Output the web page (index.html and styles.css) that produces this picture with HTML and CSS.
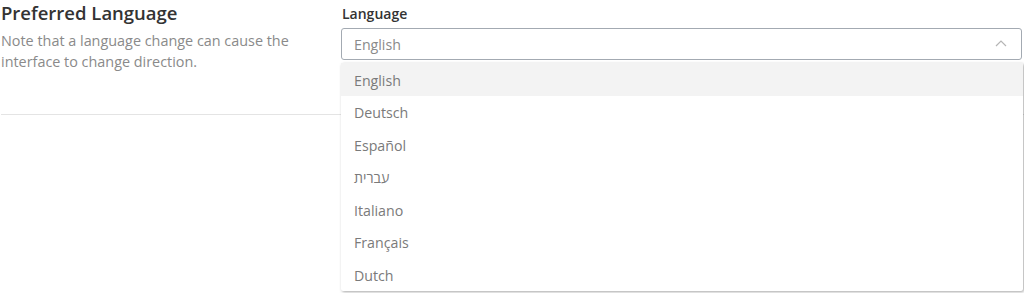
FILE: index.html
```html
<!DOCTYPE html>
<html lang="en">
<head>
  <meta charset="UTF-8" />
  <meta name="viewport" content="width=device-width, initial-scale=1.0"/>
  <title>Preferred Language</title>
  <link rel="stylesheet" href="styles.css">
</head>
<body>
  <div class="setting-row">
    <div class="setting-info">
      <div class="setting-title">Preferred Language</div>
      <div class="setting-desc">Note that a language change can cause the interface to change direction.</div>
    </div>
    <div class="setting-field">
      <label class="field-label">Language</label>
      <div class="select-wrapper">
        <div class="select-box">
          <span>English</span>
          <svg class="select-arrow" width="12" height="8" viewBox="0 0 12 8">
            <path d="M1 7 L6 2 L11 7" fill="none" stroke="#b5b5b5" stroke-width="1.2"/>
          </svg>
        </div>
        <!-- open list -->
        <ul class="select-menu">
          <li class="selected">English</li>
          <li>Deutsch</li>
          <li>Español</li>
          <li>עברית</li>
          <li>Italiano</li>
          <li>Français</li>
          <li>Dutch</li>
        </ul>
      </div>
    </div>
  </div>
</body>
</html>
```

FILE: styles.css
```css
html, body {
  min-height: 293px;
}

body {
  background-color: white;
  color: #333;
  font-family: "Open Sans", Arial, sans-serif;
  margin: 0;
  padding: 0;
}

.setting-row {
  display: flex;
  height: 114px;
  border-bottom: 1px solid #e4e4e4;
  margin-left: 1px;
}

.setting-info {
  width: 340px;
  padding-top: 1px;
}

.setting-title {
  font-size: 18.5px;
  font-weight: 600;
  color: #333;
  line-height: 24px;
  margin-bottom: 6px;
}

.setting-desc {
  font-size: 14.4px;
  color: #8a8a8a;
  line-height: 20.5px;
  padding-right: 40px;
}

.setting-field {
  flex: 1;
  margin-right: 2px;
  padding-top: 4px;
}

.field-label {
  display: block;
  font-size: 14px;
  font-weight: 600;
  color: #333;
  line-height: 20px;
  margin-left: 1px;
  margin-bottom: 4px;
}

.select-wrapper {
  position: relative;
}

.select-box {
  height: 30px;
  border: 1px solid #a3aab2;
  border-radius: 3px;
  display: flex;
  align-items: center;
  justify-content: space-between;
  padding: 0 12px;
  font-size: 14.2px;
  color: #8a8a8a;
}

.select-arrow {
  margin-right: 2px;
  margin-top: -2px;
}

.select-menu {
  position: absolute;
  top: 35px;
  left: 0;
  right: -1px;
  margin: 0;
  padding: 0;
  list-style: none;
  background-color: white;
  border-radius: 2px;
  box-shadow: 1px 1px 3px rgba(0,0,0,0.35);
  z-index: 2;
}

.select-menu li {
  height: 32.5px;
  box-sizing: border-box;
  padding: 2px 13px 0;
  display: flex;
  align-items: center;
  font-size: 14.2px;
  color: #7a7a7a;
}

.select-menu li.selected {
  background-color: #f3f3f3;
}
```
